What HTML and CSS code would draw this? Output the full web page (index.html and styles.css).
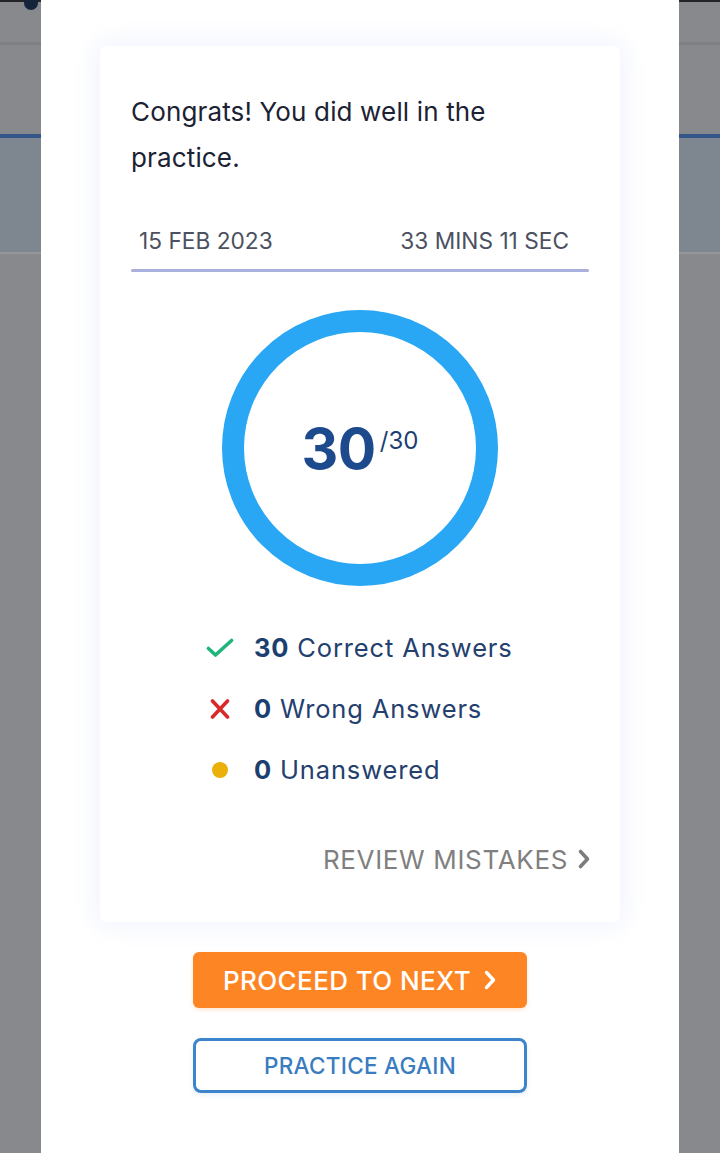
FILE: index.html
```html
<!DOCTYPE html>
<html>
<head>
<meta charset="utf-8">
<link rel="stylesheet" href="styles.css">
</head>
<body>
<div class="page">
  <div class="topline"></div>
  <div class="header"><span class="blob"></span></div>
  <div class="header-rule"></div>
  <div class="nav"></div>
  <div class="tabline"></div>
  <div class="tabs"></div>
  <div class="tabs-rule"></div>
</div>

<div class="modal">
  <div class="card">
    <h1 class="title">Congrats! You did well in the practice.</h1>
    <div class="meta">
      <span>15 FEB 2023</span>
      <span>33 MINS 11 SEC</span>
    </div>
    <div class="meta-rule"></div>

    <div class="ring">
      <span class="score">30</span><span class="total">/30</span>
    </div>

    <ul class="stats">
      <li class="stat">
        <svg class="ico" viewBox="0 0 28 20" width="28" height="20"><path d="M2.5 10.5 L9.5 17 L25.5 2.5" fill="none" stroke="#1fb57a" stroke-width="3.6" stroke-linecap="round" stroke-linejoin="round"/></svg>
        <span class="num">30</span> Correct Answers
      </li>
      <li class="stat">
        <svg class="ico" viewBox="0 0 28 20" width="28" height="20"><path d="M6.5 2 L21.5 18 M21.5 2 L6.5 18" fill="none" stroke="#d92a2a" stroke-width="3.6" stroke-linecap="round"/></svg>
        <span class="num">0</span> Wrong Answers
      </li>
      <li class="stat">
        <svg class="ico" viewBox="0 0 28 20" width="28" height="20"><circle cx="14" cy="10" r="8" fill="#eab10b"/></svg>
        <span class="num">0</span> Unanswered
      </li>
    </ul>

    <div class="review">
      <span>REVIEW MISTAKES</span>
      <svg viewBox="0 0 14 22" width="14" height="22"><path d="M3.5 3.5 L10.5 11 L3.5 18.5" fill="none" stroke="#7c7c7c" stroke-width="3.6" stroke-linecap="round" stroke-linejoin="round"/></svg>
    </div>
  </div>

  <div class="actions">
    <button class="btn btn-primary">PROCEED TO NEXT
      <svg viewBox="0 0 14 22" width="14" height="22"><path d="M3.5 3.5 L10.5 11 L3.5 18.5" fill="none" stroke="#ffffff" stroke-width="3.4" stroke-linecap="round" stroke-linejoin="round"/></svg>
    </button>
    <button class="btn btn-outline">PRACTICE AGAIN</button>
  </div>
</div>
</body>
</html>
```

FILE: styles.css
```css
* { box-sizing: border-box; }
html, body { margin: 0; padding: 0; }
body {
  width: 720px;
  height: 1153px;
  overflow: hidden;
  background: #88898d;
  font-family: Inter, "Noto Sans", sans-serif;
  position: relative;
}

.page { width: 720px; }
.topline { height: 2px; background: #232427; }
.header { height: 40px; position: relative; }
.blob {
  position: absolute; left: 24px; top: -4px;
  width: 14px; height: 12px; border-radius: 0 0 7px 7px;
  background: #14243a;
}
.header-rule { height: 3px; background: #7e7f83; }
.nav { height: 89px; }
.tabline { height: 4px; background: #33558a; }
.tabs { height: 114px; background: #7e8790; }
.tabs-rule { height: 2px; background: #95979b; }

.modal {
  position: absolute;
  left: 41px; top: 0;
  width: 638px; height: 1153px;
  background: #ffffff;
  padding: 46px 59px 0;
}

.card {
  width: 520px;
  height: 876px;
  background: #fff;
  border-radius: 6px;
  box-shadow: 0 0 22px 6px rgba(200, 210, 245, 0.22);
  padding: 43px 31px 0;
}

.title {
  margin: 0;
  font-size: 26px;
  line-height: 46px;
  font-weight: 400;
  color: #1b2233;
  width: 420px;
  letter-spacing: 0.15px;
}

.meta {
  margin-top: 37px;
  height: 44px;
  display: flex;
  justify-content: space-between;
  align-items: center;
  padding: 0 20px 0 8px;
  font-size: 22.7px;
  color: #4b5160;
}
.meta-rule {
  margin-top: 7px;
  height: 3px;
  border-radius: 2px;
  background: #a9b0df;
}

.ring {
  margin: 38px auto 0;
  width: 276px; height: 276px;
  border-radius: 50%;
  border: 22px solid #29a7f4;
  display: flex;
  align-items: center;
  justify-content: center;
  padding-left: 0;
}
.score {
  font-size: 57px;
  font-weight: 700;
  color: #1d4a8c;
  line-height: 1;
  letter-spacing: -0.5px;
}
.total {
  font-size: 24px;
  color: #1d3f73;
  align-self: flex-start;
  margin-top: 94px;
  margin-left: 4px;
}

.stats {
  list-style: none;
  margin: 31px 0 0;
  padding: 0 0 0 75px;
}
.stat {
  display: flex;
  align-items: center;
  height: 61px;
  font-size: 25.5px;
  letter-spacing: 0.85px;
  color: #24406e;
}
.ico { margin-right: 20px; flex: none; }
.num { font-weight: 700; color: #1d3f70; margin-right: 8px; }

.review {
  margin-top: 39px;
  display: flex;
  justify-content: flex-end;
  align-items: center;
  gap: 9px;
  margin-right: -2px;
  font-size: 26px;
  letter-spacing: 0.65px;
  color: #7f7f7f;
  height: 40px;
}

.actions {
  display: flex;
  flex-direction: column;
  align-items: center;
  gap: 30px;
  margin-top: 30px;
}
.btn {
  width: 334px;
  height: 56px;
  font-family: Inter, "Noto Sans", sans-serif;
  display: flex;
  align-items: center;
  justify-content: center;
  gap: 12px;
  cursor: pointer;
}
.btn-primary {
  background: #fd8524;
  border: none;
  border-radius: 6px;
  color: #fff;
  font-size: 26px;
  font-weight: 500;
  letter-spacing: 0.4px;
  box-shadow: 0 2px 4px rgba(253, 133, 36, 0.2);
}
.btn-outline {
  height: 55px;
  background: #fff;
  border: 3px solid #3c84cc;
  border-radius: 8px;
  color: #3a7cc0;
  font-size: 22.5px;
  font-weight: 500;
  letter-spacing: 0.3px;
  box-shadow: 0 2px 5px rgba(60, 132, 204, 0.12);
}
```
